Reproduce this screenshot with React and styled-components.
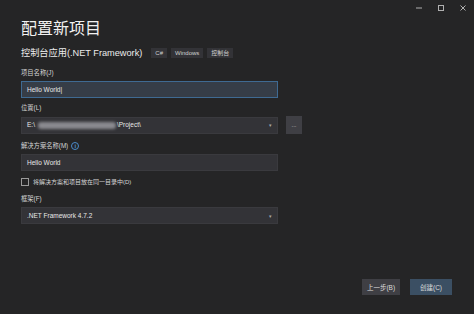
import React from "react";
import styled, { createGlobalStyle } from "styled-components";

const GlobalStyle = createGlobalStyle`
  * { box-sizing: border-box; margin: 0; padding: 0; }
  body {
    background: #252526;
    font-family: "Liberation Sans", "Noto Sans CJK SC", sans-serif;
  }
`;

const Window = styled.div`
  position: relative;
  width: 474px;
  height: 314px;
  background: #252526;
  color: #e0e0e0;
  display: flex;
  flex-direction: column;
  padding: 15px 22px 0 21px;
  overflow: hidden;
  font-family: "Liberation Sans", "Noto Sans CJK SC", sans-serif;
`;

const Controls = styled.div`
  position: absolute;
  top: 1px;
  right: 4px;
  display: flex;
  gap: 8px;
`;

const CtrlBtn = styled.div`
  width: 14px;
  height: 14px;
  display: flex;
  align-items: center;
  justify-content: center;
  color: #b0b0b0;
`;

const Title = styled.h1`
  font-size: 16px;
  font-weight: 400;
  color: #f1f1f1;
  line-height: 24px;
  font-family: "Noto Sans CJK SC", sans-serif;
`;

const SubRow = styled.div`
  display: flex;
  align-items: center;
  margin-top: 8px;
  gap: 4px;
  height: 12px;
`;

const Subtitle = styled.div`
  font-size: 9.2px;
  line-height: 12px;
  color: #ececec;
  margin-right: 5px;
`;

const Tag = styled.span`
  background: #333337;
  color: #cfcfcf;
  font-size: 6px;
  height: 10px;
  line-height: 10px;
  padding: 0 4px;
`;

const Label = styled.div`
  font-size: 6.3px;
  line-height: 10px;
  color: #d6d6d6;
  margin-top: ${(p) => p.$mt}px;
  margin-bottom: 3px;
  display: flex;
  align-items: center;
  gap: 3px;
  height: 10px;
`;

const Info = styled.span`
  width: 8px;
  height: 8px;
  border: 1px solid #4a8ccc;
  border-radius: 50%;
  color: #4a8ccc;
  font-size: 6px;
  line-height: 6px;
  text-align: center;
  font-weight: 700;
`;

const FieldRow = styled.div`
  display: flex;
  align-items: center;
  gap: 8px;
`;

const Field = styled.div`
  width: 257px;
  height: 17px;
  flex-shrink: 0;
  background: ${(p) => (p.$focus ? "#363d47" : "#333337")};
  border: 1px solid ${(p) => (p.$focus ? "#3f6a92" : "#3a3a3e")};
  display: flex;
  align-items: center;
  justify-content: space-between;
  padding: 0 5px;
  font-size: 6.5px;
  color: #e8e8e8;
`;

const Caret = styled.span`
  font-size: 5px;
  color: #aaa;
`;

const Blur = styled.span`
  display: inline-block;
  width: 78px;
  height: 7px;
  margin: 0 1px 0 3px;
  border-radius: 3px;
  background: #8a8a8f;
  filter: blur(1.5px);
  vertical-align: middle;
`;

const BrowseBtn = styled.div`
  width: 16px;
  height: 18px;
  background: #3f3f44;
  color: #cfcfcf;
  font-size: 6px;
  display: flex;
  align-items: center;
  justify-content: center;
`;

const CheckRow = styled.label`
  display: flex;
  align-items: center;
  gap: 4px;
  margin-top: 6px;
  height: 9px;
  font-size: 6px;
  color: #d6d6d6;
`;

const Box = styled.span`
  width: 8px;
  height: 8px;
  border: 1px solid #9a9a9a;
`;

const Footer = styled.div`
  margin-top: auto;
  margin-bottom: 19px;
  display: flex;
  justify-content: flex-end;
  gap: 10px;
`;

const Button = styled.div`
  width: ${(p) => p.$w}px;
  height: 16px;
  background: ${(p) => (p.$primary ? "#3b4f63" : "#3f3f44")};
  color: #dcdcdc;
  font-size: 6.5px;
  display: flex;
  align-items: center;
  justify-content: center;
`;

export default function App() {
  return (
    <>
      <GlobalStyle />
      <Window>
        <Controls>
          <CtrlBtn>
            <svg width="8" height="8" viewBox="0 0 8 8">
              <path d="M1 4h6" stroke="currentColor" strokeWidth="1" />
            </svg>
          </CtrlBtn>
          <CtrlBtn>
            <svg width="8" height="8" viewBox="0 0 8 8">
              <rect x="1.5" y="1.5" width="5" height="5" fill="none" stroke="currentColor" strokeWidth="1" />
            </svg>
          </CtrlBtn>
          <CtrlBtn>
            <svg width="8" height="8" viewBox="0 0 8 8">
              <path d="M1.5 1.5l5 5M6.5 1.5l-5 5" stroke="currentColor" strokeWidth="1" />
            </svg>
          </CtrlBtn>
        </Controls>

        <Title>配置新项目</Title>
        <SubRow>
          <Subtitle>控制台应用(.NET Framework)</Subtitle>
          <Tag>C#</Tag>
          <Tag>Windows</Tag>
          <Tag>控制台</Tag>
        </SubRow>

        <Label $mt={9}>项目名称(J)</Label>
        <Field $focus>
          <span>Hello World|</span>
        </Field>

        <Label $mt={5}>位置(L)</Label>
        <FieldRow>
          <Field>
            <span>
              E:\<Blur />\Project\
            </span>
            <Caret>▾</Caret>
          </Field>
          <BrowseBtn>...</BrowseBtn>
        </FieldRow>

        <Label $mt={7}>
          解决方案名称(M) <Info>i</Info>
        </Label>
        <Field>
          <span>Hello World</span>
        </Field>

        <CheckRow>
          <Box />
          将解决方案和项目放在同一目录中(D)
        </CheckRow>

        <Label $mt={8}>框架(F)</Label>
        <Field>
          <span>.NET Framework 4.7.2</span>
          <Caret>▾</Caret>
        </Field>

        <Footer>
          <Button $w={38}>上一步(B)</Button>
          <Button $w={42} $primary>创建(C)</Button>
        </Footer>
      </Window>
    </>
  );
}
